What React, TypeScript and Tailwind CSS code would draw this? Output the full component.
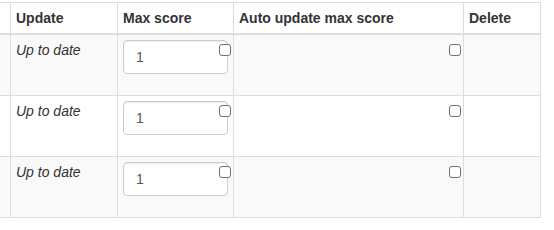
import React from 'react';

const cols = ['w-[11px]', 'w-[107px]', 'w-[116px]', 'w-[230px]', 'w-[77px]'];

const Checkbox: React.FC<{ className?: string }> = ({ className = '' }) => (
  <span
    className={`block w-[12px] h-[12px] rounded-[3px] border border-[#707070] bg-white ${className}`}
  />
);

const Row: React.FC<{ striped: boolean }> = ({ striped }) => (
  <div className={`flex h-[61px] border-b border-[#ddd] ${striped ? 'bg-[#f9f9f9]' : 'bg-white'}`}>
    <div className={`${cols[0]} shrink-0 border-r border-[#ddd]`} />
    <div className={`${cols[1]} shrink-0 border-r border-[#ddd] p-[5px] italic`}>Up to date</div>
    <div className={`${cols[2]} shrink-0 border-r border-[#ddd] p-[5px] relative`}>
      <input
        readOnly
        value="1"
        className="w-full h-[34px] px-[12px] border border-[#ccc] rounded-[4px] bg-white text-[#555] text-[14px] outline-none shadow-[inset_0_1px_1px_rgba(0,0,0,0.075)]"
      />
      <Checkbox className="absolute left-[101px] top-[9px]" />
    </div>
    <div className={`${cols[3]} shrink-0 border-r border-[#ddd] flex justify-end pt-[9px] pr-[2px]`}>
      <Checkbox />
    </div>
    <div className={`${cols[4]} shrink-0 border-r border-[#ddd]`} />
  </div>
);

export default function App() {
  return (
    <div
      className="w-[554px] h-[230px] bg-white pt-[2px] text-[14px] leading-[20px] text-[#333]"
      style={{ fontFamily: '"Liberation Sans", Arial, sans-serif' }}
    >
      <div className="w-[541px] border-t border-[#ddd]">
        <div className="flex h-[32px] border-b-2 border-[#ddd] font-bold">
          <div className={`${cols[0]} shrink-0 border-r border-[#ddd]`} />
          <div className={`${cols[1]} shrink-0 border-r border-[#ddd] px-[5px] pt-[5px]`}>Update</div>
          <div className={`${cols[2]} shrink-0 border-r border-[#ddd] px-[5px] pt-[5px]`}>Max score</div>
          <div className={`${cols[3]} shrink-0 border-r border-[#ddd] px-[5px] pt-[5px]`}>Auto update max score</div>
          <div className={`${cols[4]} shrink-0 border-r border-[#ddd] px-[5px] pt-[5px]`}>Delete</div>
        </div>
        <Row striped />
        <Row striped={false} />
        <Row striped />
      </div>
    </div>
  );
}
